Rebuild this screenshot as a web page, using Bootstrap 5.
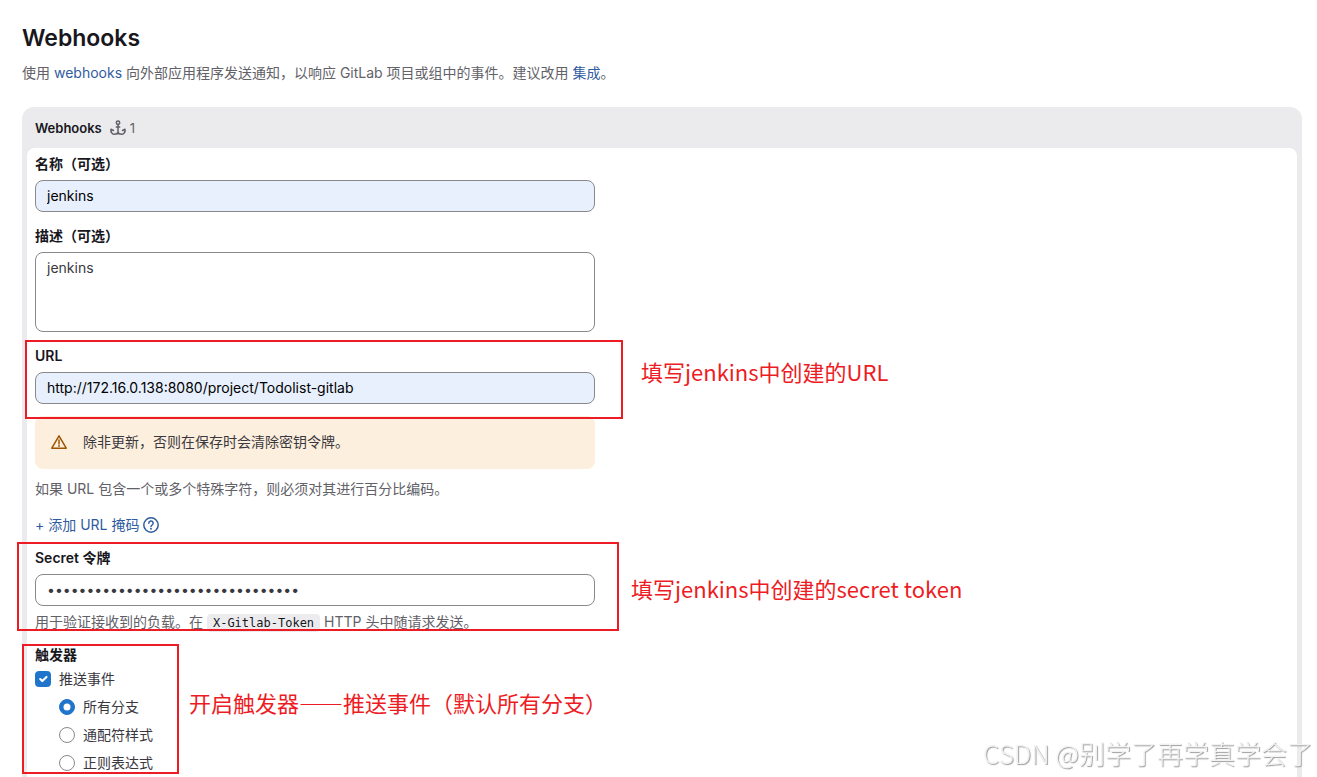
<!DOCTYPE html>
<html lang="zh-CN">
<head>
<meta charset="utf-8">
<meta name="viewport" content="width=device-width, initial-scale=1">
<title>Webhooks</title>
<link href="https://cdn.jsdelivr.net/npm/bootstrap@5.3.0/dist/css/bootstrap.min.css" rel="stylesheet">
<style>
  body { font-family: Inter, "Noto Sans CJK SC", sans-serif; font-size: 14px; line-height: 20px; color: #3a383f; background: #fff; }
  a { color: #2f5ca0; text-decoration: none; }
  a:hover { text-decoration: underline; }
  .page { padding: 24px 15px 0 22px; }
  .page-title { font-size: 23px; line-height: 28px; font-weight: 600; color: #18171d; margin-bottom: 11px; }
  .subtle { color: #626168; }
  .intro { margin-bottom: 24px; }
  .panel { background: #ebebed; border-radius: 12px 12px 0 0; padding: 0 5px; }
  .panel-head { height: 41px; padding: 0 8px; }
  .panel-title { font-size: 13px; line-height: 20px; font-weight: 600; color: #18171d; }
  .hook-count { font-size: 13px; }
  .panel-body { background: #fff; border-radius: 8px 8px 0 0; padding: 8px 8px 0; }
  .field-col { max-width: 560px; }
  .field-label { display: block; font-size: 14px; line-height: 16px; font-weight: 600; color: #18171d; margin-bottom: 8px; }
  .field { font-size: 14px; line-height: 16px; padding: 7px 11px; border-color: #89888d; border-radius: 8px; color: #3a383f; }
  .filled { background: #e8f0fe; color: #000; }
  .field-area { height: 80px; resize: none; }
  .notice { background: #fdefdd; border-radius: 8px; padding: 16px 16px 17px; margin: 12px 0 10px; gap: 16px; }
  .mask-link { margin-bottom: 15px; }
  .token-group { margin-bottom: 14px; }
  .token-help { margin: 6px 0 0; }
  .token-code { font-family: "DejaVu Sans Mono", monospace; font-size: 12px; color: #18171d; background: #ececef; border-radius: 4px; padding: 2px 6px; }
  .choice { min-height: 16px; line-height: 16px; padding: 0; margin: 0 0 12px; gap: 8px; }
  .choice .form-check-input { width: 16px; height: 16px; margin: 0; float: none; border-color: #89888d; }
  .choice .form-check-input:checked { background-color: #1f75cb; border-color: #1f75cb; }
  .note-frame { position: absolute; border: 2px solid #ed1c24; pointer-events: none; }
  .note-text { position: absolute; color: #ed1c24; font-family: "Noto Sans CJK SC", sans-serif; font-size: 22px; line-height: 32px; white-space: nowrap; }
  .frame-url { inset: -8px -28px -15px -10px; }
  .frame-token { inset: -8px -24px 2px -18px; }
  .frame-trigger { inset: -3px auto -3px -13px; width: 157px; }
  .text-url { left: 606px; top: 7px; }
  .text-token { left: 596px; top: 22px; }
  .text-trigger { left: 154px; top: 39px; }
  .watermark { right: 4px; bottom: 6px; font-family: "Noto Sans CJK SC", sans-serif; font-size: 26px; line-height: 36px; font-weight: 300; color: #f2f2f2; text-shadow: 1px 1px 1px #999; white-space: nowrap; }
</style>
</head>
<body>
<main class="page min-vh-100 d-flex flex-column">
  <h1 class="page-title">Webhooks</h1>
  <p class="intro subtle">使用 <a href="#">webhooks</a> 向外部应用程序发送通知，以响应 GitLab 项目或组中的事件。建议改用 <a href="#">集成</a>。</p>

  <section class="panel flex-grow-1 d-flex flex-column">
    <header class="panel-head d-flex align-items-center">
      <h2 class="panel-title mb-0 me-2">Webhooks</h2>
      <span class="subtle d-flex align-items-center gap-1">
        <svg width="16" height="16" viewBox="0 0 16 16" fill="none" stroke="currentColor" stroke-width="1.5" stroke-linecap="round" stroke-linejoin="round" aria-hidden="true"><circle cx="8" cy="2.700" r="1.700"/><path d="M8 4.500v9.500M6.300 7h3.400M1 12V9.300l2.500 1.200M15 12V9.300l-2.500 1.200M1 10.500c.2 2.400 1.500 3.800 3.500 3.800 1.700 0 2.900-.7 3.500-1.900.6 1.200 1.800 1.900 3.500 1.900 2 0 3.300-1.400 3.500-3.800"/></svg>
        <span class="hook-count">1</span>
      </span>
    </header>

    <form class="panel-body flex-grow-1">
      <div class="field-col">
        <div class="mb-3">
          <label class="field-label" for="hook-name">名称（可选）</label>
          <input class="form-control field filled" id="hook-name" type="text" value="jenkins">
        </div>
        <div class="mb-3">
          <label class="field-label" for="hook-desc">描述（可选）</label>
          <textarea class="form-control field field-area" id="hook-desc">jenkins</textarea>
        </div>

        <div class="position-relative">
          <label class="field-label" for="hook-url">URL</label>
          <input class="form-control field filled" id="hook-url" type="text" value="http://172.16.0.138:8080/project/Todolist-gitlab">
          <div class="note-frame frame-url z-1"></div>
          <div class="note-text text-url">填写jenkins中创建的URL</div>
        </div>

        <div class="notice d-flex align-items-center" role="alert">
          <svg width="16" height="16" viewBox="0 0 16 16" fill="none" stroke="#9e5400" stroke-width="1.500" stroke-linejoin="round" aria-hidden="true"><path d="M8 1.800 15.200 14.200H.8z"/><path d="M8 6v4" stroke-linecap="round"/><circle cx="8" cy="12" r=".9" fill="#9e5400" stroke="none"/></svg>
          <span>除非更新，否则在保存时会清除密钥令牌。</span>
        </div>
        <p class="subtle mb-3">如果 URL 包含一个或多个特殊字符，则必须对其进行百分比编码。</p>
        <a class="mask-link d-inline-flex align-items-center gap-1" href="#">+ 添加 URL 掩码
          <svg width="16" height="16" viewBox="0 0 16 16" fill="none" stroke="currentColor" stroke-width="1.500" aria-hidden="true"><circle cx="8" cy="8" r="7.200"/><path d="M5.800 6.300A2.200 2.200 0 1 1 9 8.200c-.7.400-1 .7-1 1.300" stroke-linecap="round"/><circle cx="8" cy="11.700" r=".95" fill="currentColor" stroke="none"/></svg>
        </a>

        <div class="token-group position-relative">
          <label class="field-label" for="hook-token">Secret 令牌</label>
          <input class="form-control field" id="hook-token" type="password" value="xxxxxxxxxxxxxxxxxxxxxxxxxxxxxxxx">
          <p class="token-help subtle">用于验证接收到的负载。在 <code class="token-code">X-Gitlab-Token</code> HTTP 头中随请求发送。</p>
          <div class="note-frame frame-token"></div>
          <div class="note-text text-token">填写jenkins中创建的secret token</div>
        </div>

        <fieldset class="position-relative">
          <legend class="field-label">触发器</legend>
          <div class="form-check choice d-flex align-items-center">
            <input class="form-check-input" type="checkbox" id="push" checked><label for="push">推送事件</label>
          </div>
          <div class="ms-4">
            <div class="form-check choice d-flex align-items-center">
              <input class="form-check-input" type="radio" name="branch" id="b-all" checked><label for="b-all">所有分支</label>
            </div>
            <div class="form-check choice d-flex align-items-center">
              <input class="form-check-input" type="radio" name="branch" id="b-wild"><label for="b-wild">通配符样式</label>
            </div>
            <div class="form-check choice mb-0 d-flex align-items-center">
              <input class="form-check-input" type="radio" name="branch" id="b-regex"><label for="b-regex">正则表达式</label>
            </div>
          </div>
          <div class="note-frame frame-trigger"></div>
          <div class="note-text text-trigger">开启触发器——推送事件（默认所有分支）</div>
        </fieldset>
      </div>
    </form>
  </section>
</main>
<div class="watermark position-fixed">CSDN @别学了再学真学会了</div>
<script src="https://cdn.jsdelivr.net/npm/bootstrap@5.3.0/dist/js/bootstrap.bundle.min.js"></script>
</body>
</html>
